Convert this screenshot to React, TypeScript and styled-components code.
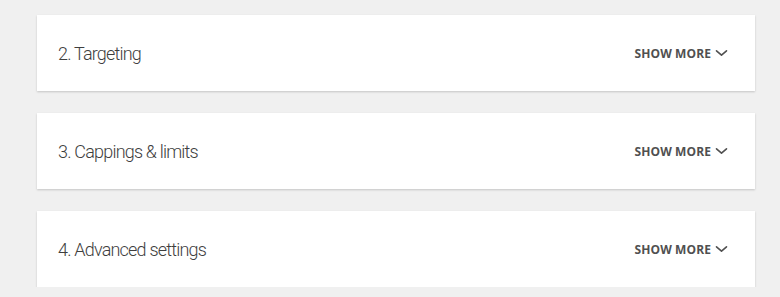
import React from "react";
import styled, { createGlobalStyle } from "styled-components";

const Global = createGlobalStyle`
  html, body { margin: 0; padding: 0; background: #f0f0f0; }
  body { font-family: Roboto, "Liberation Sans", sans-serif; }
`;

const Page = styled.div`
  display: flex;
  flex-direction: column;
  gap: 22px;
  padding: 15px 25px 0 37px;
  width: 780px;
  box-sizing: border-box;
`;

const Card = styled.div`
  height: 76px;
  background: #fff;
  box-shadow: 0 1px 2px rgba(0, 0, 0, 0.18);
  display: flex;
  align-items: center;
  justify-content: space-between;
  padding: 0 27px 0 21px;
`;

const Title = styled.div`
  font-family: Roboto, "Liberation Sans", sans-serif;
  font-weight: 300;
  font-size: 18px;
  color: #3e3e3e;
  letter-spacing: -0.8px;
  padding-top: 1px;
`;

const More = styled.button`
  all: unset;
  display: flex;
  align-items: center;
  gap: 4px;
  font-family: "Open Sans", sans-serif;
  font-weight: 700;
  font-size: 12px;
  letter-spacing: 0.1px;
  color: #505050;
  cursor: pointer;
  text-transform: uppercase;
`;

const Chevron = () => (
  <svg width="13" height="8" viewBox="0 0 13 8" fill="none">
    <path d="M1.5 1.8 L6.5 6.2 L11.5 1.8" stroke="#505050" strokeWidth="1.6" strokeLinecap="round" strokeLinejoin="round" />
  </svg>
);

const sections = ["2. Targeting", "3. Cappings & limits", "4. Advanced settings"];

export default function App() {
  return (
    <>
      <Global />
      <Page>
        {sections.map((s) => (
          <Card key={s}>
            <Title>{s}</Title>
            <More>
              Show more
              <Chevron />
            </More>
          </Card>
        ))}
      </Page>
    </>
  );
}
